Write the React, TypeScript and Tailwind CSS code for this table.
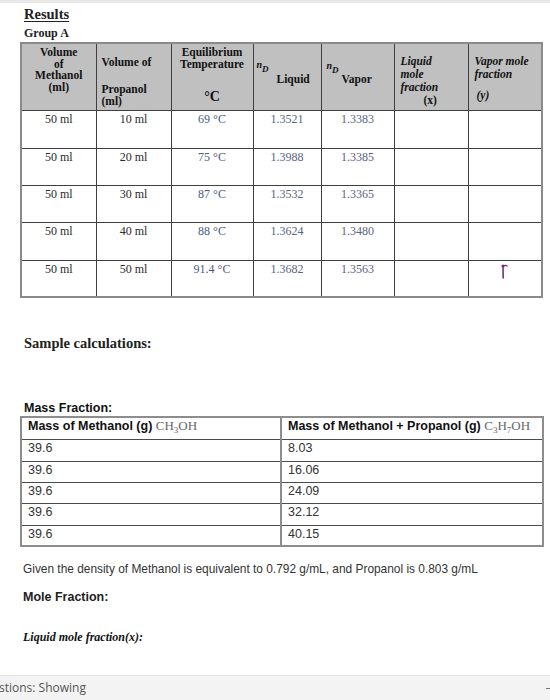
const serif = { fontFamily: '"Liberation Serif", "Times New Roman", serif' };

const rows = [
  { m: '50 ml', p: '10 ml', t: '69 °C', l: '1.3521', v: '1.3383', h: 'h-[38px]' },
  { m: '50 ml', p: '20 ml', t: '75 °C', l: '1.3988', v: '1.3385', h: 'h-[37px]' },
  { m: '50 ml', p: '30 ml', t: '87 °C', l: '1.3532', v: '1.3365', h: 'h-[37px]' },
  { m: '50 ml', p: '40 ml', t: '88 °C', l: '1.3624', v: '1.3480', h: 'h-[38px]' },
  { m: '50 ml', p: '50 ml', t: '91.4 °C', l: '1.3682', v: '1.3563', h: 'h-[37px]' },
];

const masses = [
  { a: '39.6', b: '8.03', h: 'h-[22px]' },
  { a: '39.6', b: '16.06', h: 'h-[21px]' },
  { a: '39.6', b: '24.09', h: 'h-[21px]' },
  { a: '39.6', b: '32.12', h: 'h-[22px]' },
  { a: '39.6', b: '40.15', h: 'h-[21px]' },
];

function ND() {
  return (
    <span className="text-[10px] font-bold italic leading-none">
      n<sub className="text-[9px] align-[-2px]">D</sub>
    </span>
  );
}

function PenMark() {
  return (
    <svg width="10" height="16" viewBox="0 0 10 16" className="block">
      <circle cx="3" cy="3" r="1.6" fill="#7b2d7f" />
      <path d="M3 3 Q5.5 1.8 7 3" stroke="#7b2d7f" strokeWidth="1.3" fill="none" strokeLinecap="round" />
      <path d="M3 3 L3.2 15" stroke="#7b2d7f" strokeWidth="1.6" fill="none" strokeLinecap="round" />
    </svg>
  );
}

export default function App() {
  const th = 'border border-[#3f3f3f] align-top p-0 font-bold text-[11.5px] leading-[11.5px] text-[#111] overflow-hidden';
  const td = 'border border-[#3f3f3f] align-top pt-[1px] text-[12px] leading-[14px]';
  const cell2 = 'border-x-2 border-x-[#8d8d8d] border-y border-y-[#4a4a4a] align-top px-[6px] pt-[1px] text-[12.5px] leading-[14px]';

  return (
    <div className="relative w-[550px] h-[700px] overflow-hidden bg-white text-[#222]">
      <div className="h-[3px] bg-[#e9e9e9]" />

      <div className="pl-[24px]" style={serif}>
        <h1 className="mt-[3px] text-[14.5px] font-bold leading-[17px] underline underline-offset-2">Results</h1>
        <div className="mt-[3px] text-[12px] font-bold leading-[14px]">Group A</div>
      </div>

      <div className="pl-[20px] mt-[2px]" style={serif}>
        <table className="table-fixed border-collapse border-2 border-[#8a8a8a] w-[521px]">
          <colgroup>
            <col className="w-[75px]" />
            <col className="w-[75px]" />
            <col className="w-[82px]" />
            <col className="w-[68px]" />
            <col className="w-[73px]" />
            <col className="w-[74px]" />
            <col className="w-[74px]" />
          </colgroup>
          <thead>
            <tr className="h-[67px] bg-[#c0c0c0]">
              <th className={th}>
                <div className="pt-[3px] text-center">
                  Volume<br />of<br />Methanol<br />(ml)
                </div>
              </th>
              <th className={th}>
                <div className="pt-[13px] pl-[5px] text-left">
                  Volume of
                  <div className="mt-[15px]">Propanol</div>
                  <div className="mt-[1px]">(ml)</div>
                </div>
              </th>
              <th className={th}>
                <div className="pt-[3px] text-center">
                  Equilibrium<br />Temperature
                  <div className="mt-[20px] text-[14px] leading-[14px]">°C</div>
                </div>
              </th>
              <th className={th}>
                <div className="pt-[15px] pl-[3px] text-left">
                  <ND />
                  <div className="mt-[3px] pl-[20px]">Liquid</div>
                </div>
              </th>
              <th className={th}>
                <div className="pt-[16px] pl-[5px] text-left">
                  <ND />
                  <div className="mt-[2px] pl-[15px]">Vapor</div>
                </div>
              </th>
              <th className={th}>
                <div className="pt-[11px] pl-[6px] text-left italic leading-[13px]">
                  Liquid<br />mole<br />fraction
                  <div className="pl-[23px] not-italic">(x)</div>
                </div>
              </th>
              <th className={th}>
                <div className="pt-[11px] pl-[6px] text-left italic leading-[13px]">
                  Vapor mole<br />fraction
                  <div className="mt-[8px] pl-[2px]">(y)</div>
                </div>
              </th>
            </tr>
          </thead>
          <tbody>
            {rows.map((r, i) => (
              <tr key={i} className={r.h}>
                <td className={`${td} text-center text-[#2a2a2a]`}>{r.m}</td>
                <td className={`${td} text-center text-[#2a2a2a]`}>{r.p}</td>
                <td className={`${td} text-center text-[#4b5b80]`}>{r.t}</td>
                <td className={`${td} text-center text-[#5a6580]`}>{r.l}</td>
                <td className={`${td} text-center text-[#5a6580]`}>{r.v}</td>
                <td className={td} />
                <td className={td}>
                  {i === rows.length - 1 && (
                    <div className="pl-[31px] pt-[1px]">
                      <PenMark />
                    </div>
                  )}
                </td>
              </tr>
            ))}
          </tbody>
        </table>
      </div>

      <div className="pl-[24px] mt-[37px] text-[14.5px] font-bold leading-[17px]" style={serif}>
        Sample calculations:
      </div>

      <div style={{ fontFamily: '"Liberation Sans", Arial, sans-serif' }}>
        <div className="pl-[24px] mt-[49px] text-[12.5px] font-bold leading-[14px] text-[#111]">Mass Fraction:</div>
        <div className="pl-[20px] mt-[1px]">
          <table className="table-fixed border-collapse border-2 border-[#8d8d8d] w-[522px]">
            <colgroup>
              <col className="w-[260px]" />
              <col className="w-[262px]" />
            </colgroup>
            <thead>
              <tr className="h-[22px]">
                <th className={`${cell2} text-left font-bold text-[#111]`}>
                  Mass of Methanol (g){' '}
                  <span className="font-normal text-[#666] text-[13px]" style={serif}>
                    CH<sub className="text-[9px] align-[-1px]">3</sub>OH
                  </span>
                </th>
                <th className={`${cell2} text-left font-bold text-[#111]`}>
                  Mass of Methanol + Propanol (g){' '}
                  <span className="font-normal text-[#666] text-[13px]" style={serif}>
                    C<sub className="text-[9px] align-[-1px]">3</sub>H<sub className="text-[9px] align-[-1px]">7</sub>OH
                  </span>
                </th>
              </tr>
            </thead>
            <tbody>
              {masses.map((m, i) => (
                <tr key={i} className={m.h}>
                  <td className={`${cell2} text-[#333]`}>{m.a}</td>
                  <td className={`${cell2} text-[#333]`}>{m.b}</td>
                </tr>
              ))}
            </tbody>
          </table>
        </div>

        <p className="pl-[23px] mt-[15px] text-[11.9px] leading-[14px] text-[#333]">
          Given the density of Methanol is equivalent to 0.792 g/mL, and Propanol is 0.803 g/mL
        </p>
        <p className="pl-[23px] mt-[14px] text-[12.5px] font-bold leading-[14px] text-[#222]">Mole Fraction:</p>
      </div>

      <p className="pl-[23px] mt-[26px] text-[12px] font-bold italic leading-[14px] text-[#111]" style={serif}>
        Liquid mole fraction(x):
      </p>

      <div
        className="absolute left-0 right-0 bottom-0 h-[25px] bg-[#f3f3f3] border-t border-[#e2e2e2] flex items-center justify-between text-[12px] text-[#555]"
        style={{ fontFamily: '"Open Sans", "Noto Sans", sans-serif' }}
      >
        <span className="-ml-[1px]">stions: Showing</span>
        <span className="w-[4px] h-[1px] bg-[#777]" />
      </div>
    </div>
  );
}
